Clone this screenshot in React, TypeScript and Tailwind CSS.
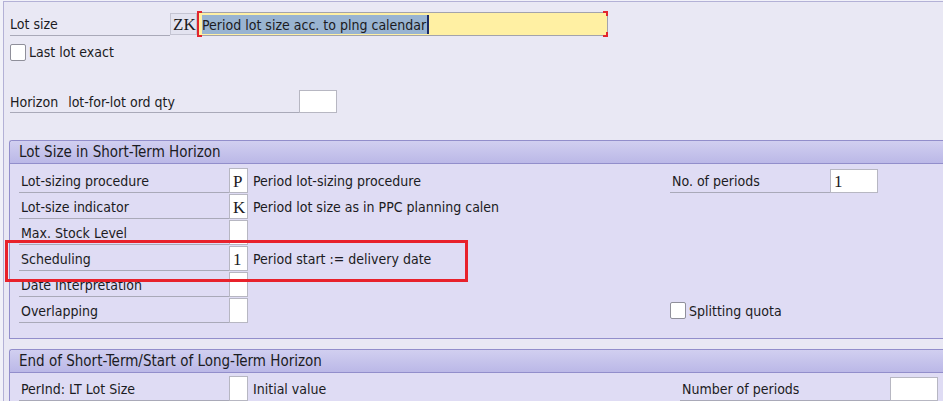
import type { ReactNode } from 'react'

const ui = "font-['Tahoma','DejaVu_Sans_Condensed','Liberation_Sans',sans-serif] text-[14px] text-[#1b1b22]"
const fixed = "font-['Liberation_Serif','Times_New_Roman',serif] text-[17px] leading-none text-[#1b1b22]"

function Box({ value, width = 'w-[19px]', height = 'h-[25px]' }: { value?: string; width?: string; height?: string }) {
  return (
    <div
      className={`${width} ${height} shrink-0 border border-[#b7b7c2] bg-white flex items-center pl-[3px] pt-[1px] ${fixed}`}
    >
      {value}
    </div>
  )
}

function Check({ label }: { label: string }) {
  return (
    <div className="flex items-center">
      <span className="w-[16px] h-[17px] rounded-[2px] border border-[#8f8f9a] bg-white" />
      <span className="ml-[3px] pt-[1px]">{label}</span>
    </div>
  )
}

interface FieldRowProps {
  label: ReactNode
  labelWidth: string
  value?: string
  boxWidth?: string
  text?: string
}

function FieldRow({ label, labelWidth, value, boxWidth, text }: FieldRowProps) {
  return (
    <div className="flex items-center h-[25px]">
      <div className={`${labelWidth} h-[25px] flex items-center pl-[2px] pt-[2px] border-b border-[#a9a9b8]`}>
        {label}
      </div>
      <Box value={value} width={boxWidth} />
      {text && <span className="ml-[5px] pt-[1px]">{text}</span>}
    </div>
  )
}

function GroupHeader({ title }: { title: string }) {
  return (
    <div className="h-[23px] flex items-center pl-[9px] pt-[1px] text-[15px] rounded-tl-[3px] border-b border-[#928ecb] bg-gradient-to-b from-[#d1cff0] to-[#bbb8e7]">
      {title}
    </div>
  )
}

export default function App() {
  return (
    <div className={`w-[943px] h-[401px] overflow-hidden bg-[#f1f1f9] relative ${ui}`}>
      <div className="ml-[3px] mt-[1px] h-[400px] border-l border-t border-[#b3b1d6] bg-[#e9e8f4] pl-[6px]">
        {/* lot size */}
        <div className="mt-[10px] flex items-center h-[24px]">
          <div className="w-[160px] h-[24px] flex items-center pt-[2px] border-b border-[#a9a9b8]">Lot size</div>
          <div className={`w-[27px] h-[22px] flex items-center pl-[2px] border border-[#c4c4d2] bg-[#e3e3f0] ${fixed}`}>
            ZK
          </div>
          <div className="relative w-[411px] h-[24px] border border-[#a3a3ac] bg-[#fff0a3] flex items-center pl-[4px]">
            <span className="bg-[#99b4d1] leading-[18px] pt-[1px] pr-[1px]">Period lot size acc. to plng calendar</span>
            <span className="w-[2px] h-[19px] bg-[#1a2a66]" />
            <span className="absolute -left-[1px] -top-[2px] w-[5px] h-[26px] border-l-2 border-t-2 border-b-2 border-[#e1262f]" />
            <span className="absolute -right-[1px] -top-[2px] w-[5px] h-[5px] border-r-2 border-t-2 border-[#e1262f]" />
            <span className="absolute -right-[1px] -bottom-[2px] w-[5px] h-[5px] border-r-2 border-b-2 border-[#e1262f]" />
          </div>
        </div>
        <div className="mt-[5px] h-[17px]">
          <Check label="Last lot exact" />
        </div>

        {/* horizon */}
        <div className="mt-[32px] flex items-center h-[23px]">
          <div className="w-[289px] h-[23px] flex items-center gap-[10px] pt-[2px] border-b border-[#a9a9b8]">
            <span>Horizon</span>
            <span>lot-for-lot ord qty</span>
          </div>
          <Box width="w-[38px]" height="h-[23px]" />
        </div>

        {/* short-term group */}
        <div className="mt-[27px] -ml-[1px] rounded-tl-[3px] border border-r-0 border-[#928ecb] bg-[#dfdcf4]">
          <GroupHeader title="Lot Size in Short-Term Horizon" />
          <div className="pl-[9px] pt-[4px] pb-[15px] flex flex-col gap-[1px]">
            <div className="flex items-center">
              <FieldRow label="Lot-sizing procedure" labelWidth="w-[210px]" value="P" text="Period lot-sizing procedure" />
              <div className="ml-auto mr-[65px] flex items-center">
                <div className="w-[160px] h-[24px] flex items-center pl-[2px] pt-[2px] border-b border-[#a9a9b8]">No. of periods</div>
                <Box value="1" width="w-[48px]" height="h-[24px]" />
              </div>
            </div>
            <FieldRow label="Lot-size indicator" labelWidth="w-[210px]" value="K" text="Period lot size as in PPC planning calen" />
            <FieldRow label="Max. Stock Level" labelWidth="w-[210px]" />
            <FieldRow label="Scheduling" labelWidth="w-[210px]" value="1" text="Period start := delivery date" />
            <FieldRow label="Date Interpretation" labelWidth="w-[210px]" />
            <div className="flex items-center">
              <FieldRow label="Overlapping" labelWidth="w-[210px]" />
              <div className="ml-[422px]">
                <Check label="Splitting quota" />
              </div>
            </div>
          </div>
        </div>

        {/* long-term group */}
        <div className="mt-[10px] -ml-[1px] rounded-tl-[3px] border border-r-0 border-[#928ecb] bg-[#dfdcf4]">
          <GroupHeader title="End of Short-Term/Start of Long-Term Horizon" />
          <div className="pl-[9px] pt-[3px] flex items-center">
            <FieldRow label="PerInd: LT Lot Size" labelWidth="w-[210px]" text="Initial value" />
            <div className="ml-auto mr-[5px] flex items-center">
              <div className="w-[210px] h-[24px] flex items-center pl-[2px] pt-[2px] border-b border-[#a9a9b8]">Number of periods</div>
              <Box width="w-[48px]" height="h-[24px]" />
            </div>
          </div>
        </div>
      </div>

      {/* highlight annotation */}
      <div className="absolute left-[5px] top-[240px] w-[463px] h-[42px] border-[3px] border-[#e8212b]" />
    </div>
  )
}
